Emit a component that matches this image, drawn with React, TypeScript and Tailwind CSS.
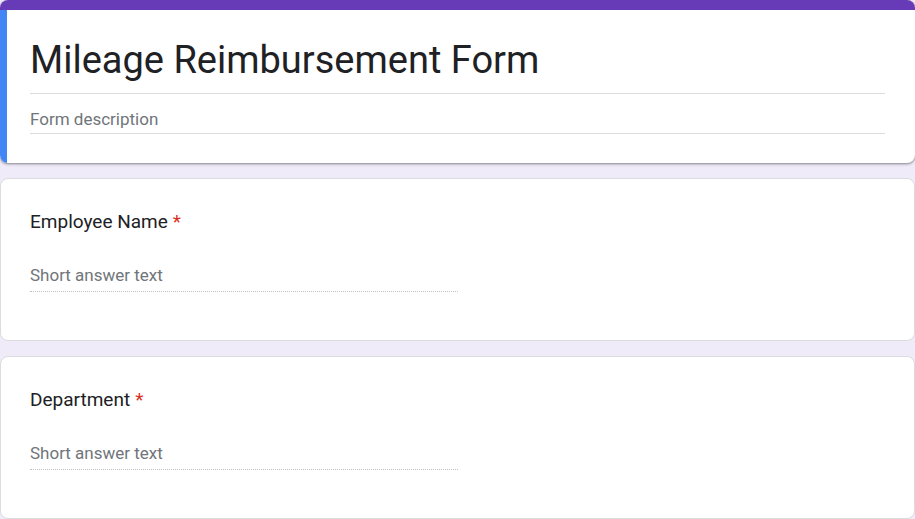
import React from "react";

function QuestionCard({ title }: { title: string }) {
  return (
    <div className="rounded-lg border border-[#dadce0] bg-white px-[29px] pt-[31px] pb-[48px]">
      <div className="flex text-[19px] leading-6 text-[#202124]">
        <span>{title}</span>
        <span className="ml-[5px] text-[#d93025]">*</span>
      </div>
      <div className="mt-[29px] w-[428px] border-b border-dotted border-[#bdc1c6] pb-1 text-[17px] leading-6 text-[#70757a]">
        Short answer text
      </div>
    </div>
  );
}

export default function App() {
  return (
    <div
      className="flex min-h-screen flex-col gap-[15px] bg-[#f0ebf8]"
      style={{ fontFamily: "Roboto, 'Noto Sans', Arial, sans-serif" }}
    >
      <div className="overflow-hidden rounded-lg bg-white shadow-[0_1px_2px_rgba(0,0,0,0.3),0_1px_3px_1px_rgba(0,0,0,0.12)]">
        <div className="h-[10px] bg-[#673ab7]" />
        <div className="border-l-[7px] border-[#4285f4] pl-[23px] pr-[30px] pt-[28px] pb-[29px]">
          <div className="border-b border-[#dadce0] pb-[10px] text-[38px] leading-[45px] text-[#202124]">
            Mileage Reimbursement Form
          </div>
          <div className="mt-[13px] border-b border-[#dadce0] pb-[2px] text-[17px] leading-6 text-[#70757a]">
            Form description
          </div>
        </div>
      </div>
      <QuestionCard title="Employee Name" />
      <QuestionCard title="Department" />
    </div>
  );
}
